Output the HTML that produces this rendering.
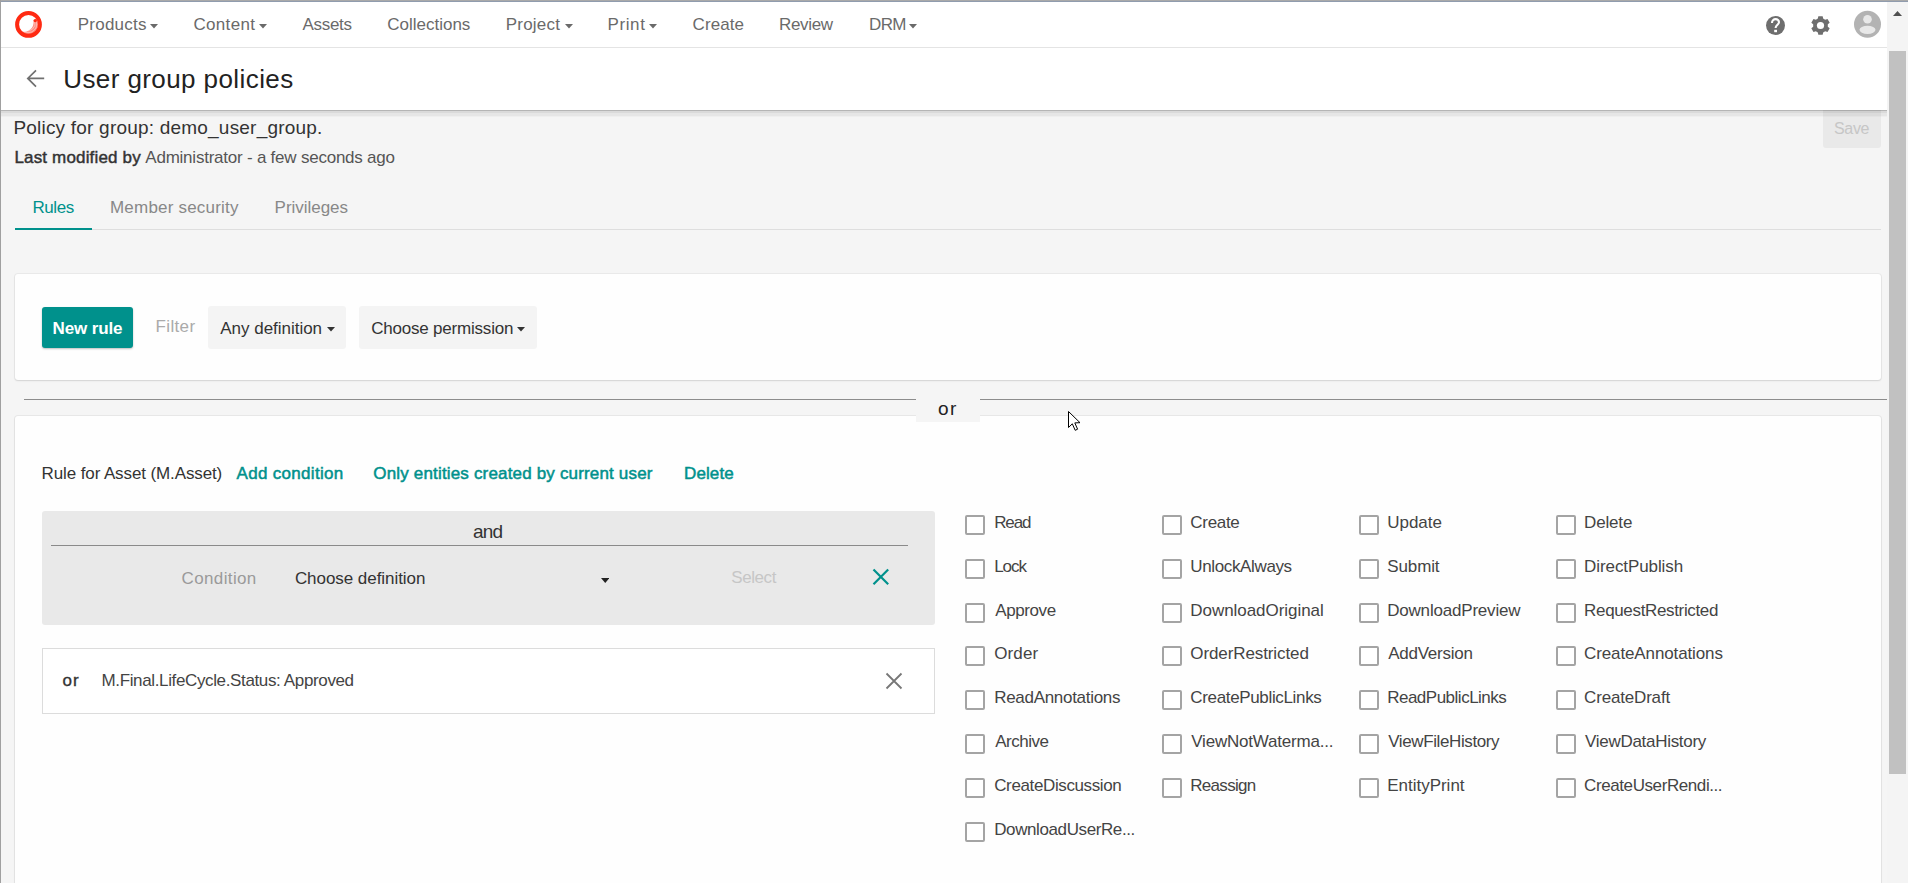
<!DOCTYPE html><html><head><meta charset="utf-8"><style>
html,body{margin:0;padding:0;}
body{width:1908px;height:883px;overflow:hidden;position:relative;background:#f5f5f5;font-family:"Liberation Sans",sans-serif;}
.a{position:absolute;}
.t{position:absolute;white-space:pre;font-family:"Liberation Sans",sans-serif;}
.cb{position:absolute;width:16px;height:16px;border:2px solid #a4a4a4;border-radius:2px;background:#fff;}
</style></head><body>

<div class="a" style="left:0;top:0;width:1908px;height:47px;background:#fff"></div>
<div class="a" style="left:0;top:47px;width:1887px;height:1px;background:#e4e4e4"></div>
<div class="a" style="left:0;top:48px;width:1887px;height:62px;background:#fff"></div>
<div class="a" style="left:1823px;top:110px;width:58px;height:38px;background:#e9e9e9;border-radius:0 0 3px 3px"></div>
<div class="a" style="left:0;top:110px;width:1887px;height:1px;background:rgba(0,0,0,.26)"></div>
<div class="a" style="left:0;top:111px;width:1887px;height:2px;background:rgba(0,0,0,.11)"></div>
<div class="a" style="left:0;top:113px;width:1887px;height:3px;background:rgba(0,0,0,.06)"></div>
<div class="a" style="left:0;top:116px;width:1887px;height:1px;background:rgba(0,0,0,.025)"></div>
<div class="a" style="left:15px;top:229px;width:1866px;height:1px;background:#dedede"></div>
<div class="a" style="left:15px;top:228px;width:77px;height:2px;background:#00918c"></div>
<div class="a" style="left:15px;top:274px;width:1866px;height:106px;background:#fefefe;border-radius:3px;box-shadow:0 0 0 1px rgba(0,0,0,.045),0 1px 2px rgba(0,0,0,.1)"></div>
<div class="a" style="left:42px;top:307px;width:91px;height:41px;background:#00918c;border-radius:3px;box-shadow:0 1px 2px rgba(0,0,0,.25)"></div>
<div class="a" style="left:208px;top:306px;width:138px;height:43px;background:#f4f4f4;border-radius:3px"></div>
<div class="a" style="left:359px;top:306px;width:178px;height:43px;background:#f4f4f4;border-radius:3px"></div>
<div class="a" style="left:24px;top:399px;width:1863px;height:1px;background:#8c8c8c"></div>
<div class="a" style="left:15px;top:416px;width:1866px;height:480px;background:#fefefe;border-radius:3px;box-shadow:0 0 0 1px rgba(0,0,0,.05),0 1px 2px rgba(0,0,0,.1)"></div>
<div class="a" style="left:916px;top:398px;width:64px;height:24px;background:#f5f5f5"></div>
<div class="a" style="left:42px;top:511px;width:893px;height:114px;background:#e9e9e9;border-radius:3px"></div>
<div class="a" style="left:51px;top:545px;width:857px;height:1px;background:#8a8a8a"></div>
<div class="a" style="left:42px;top:648px;width:891px;height:64px;background:#fff;border:1px solid #dcdcdc"></div>
<svg class="a" style="left:150px;top:24px" width="8" height="4.5" viewBox="0 0 8 4.5"><path d="M0 0H8L4.0 4.5Z" fill="#6a6a6a"/></svg>
<svg class="a" style="left:259px;top:24px" width="8" height="4.5" viewBox="0 0 8 4.5"><path d="M0 0H8L4.0 4.5Z" fill="#6a6a6a"/></svg>
<svg class="a" style="left:564.5px;top:24px" width="8.0" height="4.5" viewBox="0 0 8.0 4.5"><path d="M0 0H8.0L4.0 4.5Z" fill="#6a6a6a"/></svg>
<svg class="a" style="left:649px;top:24px" width="8" height="4.5" viewBox="0 0 8 4.5"><path d="M0 0H8L4.0 4.5Z" fill="#6a6a6a"/></svg>
<svg class="a" style="left:909px;top:24px" width="8" height="4.5" viewBox="0 0 8 4.5"><path d="M0 0H8L4.0 4.5Z" fill="#6a6a6a"/></svg>
<svg class="a" style="left:326.5px;top:327px" width="8.0" height="4.5" viewBox="0 0 8.0 4.5"><path d="M0 0H8.0L4.0 4.5Z" fill="#333"/></svg>
<svg class="a" style="left:517px;top:327px" width="8" height="4.5" viewBox="0 0 8 4.5"><path d="M0 0H8L4.0 4.5Z" fill="#333"/></svg>
<svg class="a" style="left:600.5px;top:577.5px" width="8.5" height="5.0" viewBox="0 0 8.5 5.0"><path d="M0 0H8.5L4.25 5.0Z" fill="#222"/></svg>
<svg class="a" style="left:872px;top:567.5px" width="18" height="18" viewBox="0 0 18 18"><path d="M1.5 1.5L16.2 16.2M16.2 1.5L1.5 16.2" stroke="#00918c" stroke-width="2.2"/></svg>
<svg class="a" style="left:885px;top:672px" width="18" height="18" viewBox="0 0 18 18"><path d="M1.5 1.5L16.5 16.5M16.5 1.5L1.5 16.5" stroke="#777" stroke-width="1.8"/></svg>
<div class="cb" style="left:965.2px;top:514.8px"></div>
<div class="cb" style="left:1162.2px;top:514.8px"></div>
<div class="cb" style="left:1359.2px;top:514.8px"></div>
<div class="cb" style="left:1556.2px;top:514.8px"></div>
<div class="cb" style="left:965.2px;top:558.7px"></div>
<div class="cb" style="left:1162.2px;top:558.7px"></div>
<div class="cb" style="left:1359.2px;top:558.7px"></div>
<div class="cb" style="left:1556.2px;top:558.7px"></div>
<div class="cb" style="left:965.2px;top:602.5px"></div>
<div class="cb" style="left:1162.2px;top:602.5px"></div>
<div class="cb" style="left:1359.2px;top:602.5px"></div>
<div class="cb" style="left:1556.2px;top:602.5px"></div>
<div class="cb" style="left:965.2px;top:646.4px"></div>
<div class="cb" style="left:1162.2px;top:646.4px"></div>
<div class="cb" style="left:1359.2px;top:646.4px"></div>
<div class="cb" style="left:1556.2px;top:646.4px"></div>
<div class="cb" style="left:965.2px;top:690.2px"></div>
<div class="cb" style="left:1162.2px;top:690.2px"></div>
<div class="cb" style="left:1359.2px;top:690.2px"></div>
<div class="cb" style="left:1556.2px;top:690.2px"></div>
<div class="cb" style="left:965.2px;top:734.1px"></div>
<div class="cb" style="left:1162.2px;top:734.1px"></div>
<div class="cb" style="left:1359.2px;top:734.1px"></div>
<div class="cb" style="left:1556.2px;top:734.1px"></div>
<div class="cb" style="left:965.2px;top:778.0px"></div>
<div class="cb" style="left:1162.2px;top:778.0px"></div>
<div class="cb" style="left:1359.2px;top:778.0px"></div>
<div class="cb" style="left:1556.2px;top:778.0px"></div>
<div class="cb" style="left:965.2px;top:821.8px"></div>
<div class="a" style="left:1887px;top:2px;width:21px;height:881px;background:#f4f4f4"></div>
<div class="a" style="left:1889px;top:51px;width:17px;height:723px;background:#c1c1c1"></div>
<svg class="a" style="left:1892px;top:10px" width="11" height="7" viewBox="0 0 11 7"><path d="M1 6H10L5.5 1Z" fill="#505050"/></svg>
<div class="a" style="left:0;top:0;width:1908px;height:1px;background:#a9a9a9"></div>
<div class="a" style="left:0;top:1px;width:1908px;height:1px;background:#909cae"></div>
<div class="a" style="left:0;top:0;width:1px;height:883px;background:#a0a0a0"></div>
<svg class="a" style="left:13px;top:9px" width="32" height="32" viewBox="0 0 32 32"><circle cx="15.5" cy="15.4" r="11.4" fill="none" stroke="#ff2a12" stroke-width="4"/><path d="M23.2 9.5 A9.6 9.6 0 0 1 9.3 22.6 A 9.5 9.5 0 0 0 20.6 12.3 Z" fill="#ff2a12" fill-opacity="0.55"/><path d="M22.5 10.6 A8.6 8.6 0 0 1 10.5 22.3 M21.8 12.5 A7.5 7.5 0 0 1 12 21.5" fill="none" stroke="#fff" stroke-width="0.5" stroke-opacity="0.8"/><circle cx="22.2" cy="11.6" r="1.7" fill="#ff2a12"/></svg>
<svg class="a" style="left:1765px;top:15px" width="21" height="21" viewBox="0 0 21 21"><circle cx="10.5" cy="10.5" r="9.5" fill="#6e6e6e"/><path d="M7 8C7 5.5 8.6 4.1 10.6 4.1C12.6 4.1 14 5.4 14 7.2C14 9.6 10.6 9.9 10.6 13" fill="none" stroke="#fff" stroke-width="2.1"/><rect x="9.2" y="14.8" width="2.8" height="2.4" fill="#fff"/></svg>
<svg class="a" style="left:1810px;top:15px" width="21" height="21" viewBox="0 0 21 21"><path d="M8.34 1.15 L12.66 1.15 L13.15 3.59 L15.16 4.75 L17.52 3.95 L19.68 7.69 L17.81 9.34 L17.81 11.66 L19.68 13.31 L17.52 17.05 L15.16 16.25 L13.15 17.41 L12.66 19.85 L8.34 19.85 L7.85 17.41 L5.84 16.25 L3.48 17.05 L1.32 13.31 L3.19 11.66 L3.19 9.34 L1.32 7.69 L3.48 3.95 L5.84 4.75 L7.85 3.59Z" fill="#6e6e6e"/><circle cx="10.5" cy="10.5" r="3.6" fill="#fff"/></svg>
<svg class="a" style="left:1853px;top:10px" width="29" height="29" viewBox="0 0 29 29"><circle cx="14.5" cy="14.3" r="13.5" fill="#b3b3b3"/><circle cx="14.5" cy="9.2" r="4.3" fill="#e8e8e8"/><ellipse cx="14.5" cy="19.8" rx="8" ry="4.1" fill="#e8e8e8"/></svg>
<svg class="a" style="left:26px;top:69px" width="20" height="20" viewBox="0 0 20 20"><path d="M18.2 9.4H1.6M10 1.4L1.8 9.4L10 17.6" fill="none" stroke="#707070" stroke-width="1.7"/></svg>
<svg class="a" style="left:1067px;top:410px" width="16" height="22" viewBox="0 0 16 22"><path d="M1.5 1.5V17.5L5.3 13.8L8.2 20.3L10.6 19.2L7.8 12.9L13 12.7Z" fill="#fff" stroke="#000" stroke-width="1" stroke-linejoin="round"/></svg>
<div class="t" style="left:77.80px;top:16.00px;font-size:17px;line-height:17px;font-weight:400;color:#6a6a6a;letter-spacing:0.229px;">Products</div>
<div class="t" style="left:193.40px;top:16.00px;font-size:17px;line-height:17px;font-weight:400;color:#6a6a6a;letter-spacing:0.333px;">Content</div>
<div class="t" style="left:302.60px;top:16.00px;font-size:17px;line-height:17px;font-weight:400;color:#6a6a6a;letter-spacing:-0.320px;">Assets</div>
<div class="t" style="left:387.20px;top:16.00px;font-size:17px;line-height:17px;font-weight:400;color:#6a6a6a;letter-spacing:0.000px;">Collections</div>
<div class="t" style="left:505.80px;top:16.00px;font-size:17px;line-height:17px;font-weight:400;color:#6a6a6a;letter-spacing:0.200px;">Project</div>
<div class="t" style="left:607.40px;top:16.00px;font-size:17px;line-height:17px;font-weight:400;color:#6a6a6a;letter-spacing:0.650px;">Print</div>
<div class="t" style="left:692.50px;top:16.00px;font-size:17px;line-height:17px;font-weight:400;color:#6a6a6a;letter-spacing:0.100px;">Create</div>
<div class="t" style="left:779.00px;top:16.00px;font-size:17px;line-height:17px;font-weight:400;color:#6a6a6a;letter-spacing:-0.340px;">Review</div>
<div class="t" style="left:869.00px;top:16.00px;font-size:17px;line-height:17px;font-weight:400;color:#6a6a6a;letter-spacing:-0.650px;">DRM</div>
<div class="t" style="left:63.20px;top:66.30px;font-size:26px;line-height:26px;font-weight:400;color:#222;letter-spacing:0.417px;">User group policies</div>
<div class="t" style="left:13.40px;top:118.10px;font-size:19px;line-height:19px;font-weight:400;color:#333;letter-spacing:0.209px;">Policy for group: demo_user_group.</div>
<div class="t" style="left:14.40px;top:149.20px;font-size:17px;line-height:17px;font-weight:400;color:#333;letter-spacing:0.167px;-webkit-text-stroke:0.45px #333;">Last modified by</div>
<div class="t" style="left:145.30px;top:149.20px;font-size:17px;line-height:17px;font-weight:400;color:#555;letter-spacing:-0.228px;">Administrator - a few seconds ago</div>
<div class="t" style="left:32.50px;top:199.00px;font-size:17px;line-height:17px;font-weight:400;color:#00918c;letter-spacing:-0.450px;">Rules</div>
<div class="t" style="left:110.00px;top:199.00px;font-size:17px;line-height:17px;font-weight:400;color:#888;letter-spacing:0.200px;">Member security</div>
<div class="t" style="left:274.60px;top:199.00px;font-size:17px;line-height:17px;font-weight:400;color:#888;letter-spacing:-0.033px;">Privileges</div>
<div class="t" style="left:1834.00px;top:121.00px;font-size:16px;line-height:16px;font-weight:400;color:#c6c6c6;letter-spacing:-0.333px;">Save</div>
<div class="t" style="left:52.60px;top:319.50px;font-size:17px;line-height:17px;font-weight:700;color:#fff;letter-spacing:-0.129px;">New rule</div>
<div class="t" style="left:155.60px;top:318.00px;font-size:17px;line-height:17px;font-weight:400;color:#aaa;letter-spacing:0.340px;">Filter</div>
<div class="t" style="left:220.30px;top:320.00px;font-size:17px;line-height:17px;font-weight:400;color:#333;letter-spacing:-0.023px;">Any definition</div>
<div class="t" style="left:371.20px;top:319.80px;font-size:17px;line-height:17px;font-weight:400;color:#333;letter-spacing:-0.206px;">Choose permission</div>
<div class="t" style="left:938.00px;top:398.90px;font-size:19px;line-height:19px;font-weight:400;color:#222;letter-spacing:1.500px;">or</div>
<div class="t" style="left:41.60px;top:464.70px;font-size:17px;line-height:17px;font-weight:400;color:#333;letter-spacing:-0.113px;">Rule for Asset (M.Asset)</div>
<div class="t" style="left:236.50px;top:464.70px;font-size:17px;line-height:17px;font-weight:400;color:#00918c;letter-spacing:0.308px;-webkit-text-stroke:0.5px #00918c;">Add condition</div>
<div class="t" style="left:373.30px;top:464.70px;font-size:17px;line-height:17px;font-weight:400;color:#00918c;letter-spacing:0.169px;-webkit-text-stroke:0.5px #00918c;">Only entities created by current user</div>
<div class="t" style="left:684.00px;top:464.70px;font-size:17px;line-height:17px;font-weight:400;color:#00918c;letter-spacing:0.120px;-webkit-text-stroke:0.5px #00918c;">Delete</div>
<div class="t" style="left:473.00px;top:521.50px;font-size:19px;line-height:19px;font-weight:400;color:#333;letter-spacing:-0.800px;">and</div>
<div class="t" style="left:181.50px;top:570.00px;font-size:17px;line-height:17px;font-weight:400;color:#9a9a9a;letter-spacing:0.375px;">Condition</div>
<div class="t" style="left:294.90px;top:569.90px;font-size:17px;line-height:17px;font-weight:400;color:#333;letter-spacing:-0.050px;">Choose definition</div>
<div class="t" style="left:731.20px;top:569.30px;font-size:17px;line-height:17px;font-weight:400;color:#c6c6c6;letter-spacing:-0.400px;">Select</div>
<div class="t" style="left:62.40px;top:671.50px;font-size:17px;line-height:17px;font-weight:400;color:#333;letter-spacing:1.200px;-webkit-text-stroke:0.35px #333;">or</div>
<div class="t" style="left:101.50px;top:671.50px;font-size:17px;line-height:17px;font-weight:400;color:#444;letter-spacing:-0.364px;">M.Final.LifeCycle.Status: Approved</div>
<div class="t" style="left:994.20px;top:513.90px;font-size:17px;line-height:17px;font-weight:400;color:#444;letter-spacing:-1.100px;">Read</div>
<div class="t" style="left:1190.30px;top:513.90px;font-size:17px;line-height:17px;font-weight:400;color:#444;letter-spacing:-0.300px;">Create</div>
<div class="t" style="left:1387.20px;top:513.90px;font-size:17px;line-height:17px;font-weight:400;color:#444;letter-spacing:0.000px;">Update</div>
<div class="t" style="left:1584.10px;top:513.90px;font-size:17px;line-height:17px;font-weight:400;color:#444;letter-spacing:-0.180px;">Delete</div>
<div class="t" style="left:994.20px;top:557.76px;font-size:17px;line-height:17px;font-weight:400;color:#444;letter-spacing:-1.067px;">Lock</div>
<div class="t" style="left:1190.30px;top:557.76px;font-size:17px;line-height:17px;font-weight:400;color:#444;letter-spacing:-0.364px;">UnlockAlways</div>
<div class="t" style="left:1387.20px;top:557.76px;font-size:17px;line-height:17px;font-weight:400;color:#444;letter-spacing:-0.100px;">Submit</div>
<div class="t" style="left:1584.10px;top:557.76px;font-size:17px;line-height:17px;font-weight:400;color:#444;letter-spacing:-0.092px;">DirectPublish</div>
<div class="t" style="left:995.20px;top:601.62px;font-size:17px;line-height:17px;font-weight:400;color:#444;letter-spacing:-0.400px;">Approve</div>
<div class="t" style="left:1190.30px;top:601.62px;font-size:17px;line-height:17px;font-weight:400;color:#444;letter-spacing:-0.047px;">DownloadOriginal</div>
<div class="t" style="left:1387.20px;top:601.62px;font-size:17px;line-height:17px;font-weight:400;color:#444;letter-spacing:-0.193px;">DownloadPreview</div>
<div class="t" style="left:1584.10px;top:601.62px;font-size:17px;line-height:17px;font-weight:400;color:#444;letter-spacing:-0.344px;">RequestRestricted</div>
<div class="t" style="left:994.20px;top:645.48px;font-size:17px;line-height:17px;font-weight:400;color:#444;letter-spacing:0.125px;">Order</div>
<div class="t" style="left:1190.30px;top:645.48px;font-size:17px;line-height:17px;font-weight:400;color:#444;letter-spacing:-0.100px;">OrderRestricted</div>
<div class="t" style="left:1388.20px;top:645.48px;font-size:17px;line-height:17px;font-weight:400;color:#444;letter-spacing:-0.244px;">AddVersion</div>
<div class="t" style="left:1584.10px;top:645.48px;font-size:17px;line-height:17px;font-weight:400;color:#444;letter-spacing:-0.125px;">CreateAnnotations</div>
<div class="t" style="left:994.20px;top:689.34px;font-size:17px;line-height:17px;font-weight:400;color:#444;letter-spacing:-0.293px;">ReadAnnotations</div>
<div class="t" style="left:1190.30px;top:689.34px;font-size:17px;line-height:17px;font-weight:400;color:#444;letter-spacing:-0.344px;">CreatePublicLinks</div>
<div class="t" style="left:1387.20px;top:689.34px;font-size:17px;line-height:17px;font-weight:400;color:#444;letter-spacing:-0.500px;">ReadPublicLinks</div>
<div class="t" style="left:1584.10px;top:689.34px;font-size:17px;line-height:17px;font-weight:400;color:#444;letter-spacing:-0.180px;">CreateDraft</div>
<div class="t" style="left:995.20px;top:733.20px;font-size:17px;line-height:17px;font-weight:400;color:#444;letter-spacing:-0.500px;">Archive</div>
<div class="t" style="left:1191.30px;top:733.20px;font-size:17px;line-height:17px;font-weight:400;color:#444;letter-spacing:-0.206px;">ViewNotWaterma...</div>
<div class="t" style="left:1388.20px;top:733.20px;font-size:17px;line-height:17px;font-weight:400;color:#444;letter-spacing:-0.386px;">ViewFileHistory</div>
<div class="t" style="left:1585.10px;top:733.20px;font-size:17px;line-height:17px;font-weight:400;color:#444;letter-spacing:-0.293px;">ViewDataHistory</div>
<div class="t" style="left:994.20px;top:777.06px;font-size:17px;line-height:17px;font-weight:400;color:#444;letter-spacing:-0.373px;">CreateDiscussion</div>
<div class="t" style="left:1190.30px;top:777.06px;font-size:17px;line-height:17px;font-weight:400;color:#444;letter-spacing:-0.714px;">Reassign</div>
<div class="t" style="left:1387.20px;top:777.06px;font-size:17px;line-height:17px;font-weight:400;color:#444;letter-spacing:-0.010px;">EntityPrint</div>
<div class="t" style="left:1584.10px;top:777.06px;font-size:17px;line-height:17px;font-weight:400;color:#444;letter-spacing:-0.412px;">CreateUserRendi...</div>
<div class="t" style="left:994.20px;top:820.92px;font-size:17px;line-height:17px;font-weight:400;color:#444;letter-spacing:-0.394px;">DownloadUserRe...</div>
</body></html>
